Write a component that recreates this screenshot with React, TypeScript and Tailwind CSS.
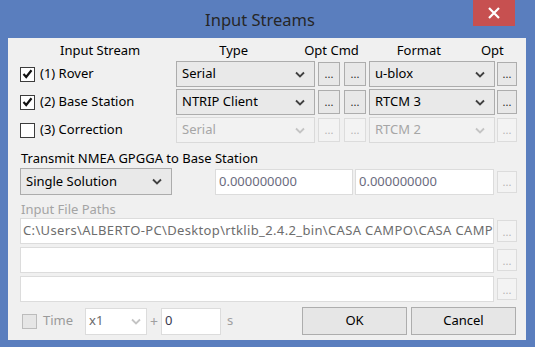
import React from "react";

const font = { fontFamily: '"Noto Sans", "Open Sans", Arial, sans-serif' };

const Chevron = ({ disabled }: { disabled?: boolean }) => (
  <svg width="10" height="7" viewBox="0 0 10 7" className="shrink-0">
    <path
      d="M1 1.5 L5 5.5 L9 1.5"
      fill="none"
      stroke={disabled ? "#c4c4c4" : "#404040"}
      strokeWidth="1.8"
    />
  </svg>
);

const Select = ({
  value,
  width,
  height = 26,
  disabled,
}: {
  value: string;
  width: string;
  height?: number;
  disabled?: boolean;
}) => (
  <div
    className={`${width} ${
      height === 27 ? "h-[27px]" : "h-[26px]"
    } flex items-center justify-between pl-[5px] pr-[9px] border ${
      disabled
        ? "border-[#dadada] bg-[#f2f2f2] text-[#a6a6a6]"
        : "border-[#acacac] bg-[#e9e9e9] text-black"
    }`}
  >
    <span className="truncate">{value}</span>
    <Chevron disabled={disabled} />
  </div>
);

const Dots = ({ disabled, w = "w-[22px]" }: { disabled?: boolean; w?: string }) => (
  <div
    className={`${w} h-[24px] flex items-center justify-center border text-[11px] leading-none pb-[1px] ${
      disabled
        ? "border-[#dcdcdc] bg-[#f3f3f3] text-[#b4b4b4]"
        : "border-[#adadad] bg-[#e8e8e8] text-[#2a2a2a]"
    }`}
  >
    ...
  </div>
);

const SmallDots = () => (
  <div className="w-[20px] h-[22px] flex items-center justify-center border border-[#dcdcdc] bg-[#f3f3f3] text-[#b4b4b4] text-[11px] leading-none">
    ...
  </div>
);

const Check = ({ checked, disabled }: { checked?: boolean; disabled?: boolean }) => (
  <div
    className={`w-[15px] h-[15px] shrink-0 flex items-center justify-center border ${
      disabled ? "border-[#bcbcbc] bg-[#e6e6e6]" : "border-[#3c3c3c] bg-white"
    }`}
  >
    {checked && (
      <svg width="11" height="10" viewBox="0 0 11 10">
        <path d="M1.5 5 L4.2 8 L9.5 1.2" fill="none" stroke="#111" strokeWidth="2.2" />
      </svg>
    )}
  </div>
);

const StreamRow = ({
  label,
  type,
  format,
  checked,
  disabled,
}: {
  label: string;
  type: string;
  format: string;
  checked?: boolean;
  disabled?: boolean;
}) => (
  <div className="flex items-center h-[26px]">
    <div className="w-[156px] flex items-center">
      <Check checked={checked} />
      <span className="ml-[5px] whitespace-nowrap">{label}</span>
    </div>
    <Select value={type} width="w-[139px]" disabled={disabled} />
    <div className="ml-[3px]">
      <Dots disabled={disabled} />
    </div>
    <div className="ml-[4px]">
      <Dots disabled={disabled} />
    </div>
    <div className="ml-[3px]">
      <Select value={format} width="w-[126px]" disabled={disabled} />
    </div>
    <div className="ml-[2px]">
      <Dots disabled={disabled} w="w-[20px]" />
    </div>
  </div>
);

const PathRow = ({ value }: { value?: string }) => (
  <div className="flex items-center h-[26px]">
    <div className="w-[474px] h-[26px] flex items-center px-[2px] border border-[#dcdcdc] bg-white text-[#6d6d6d] tracking-[0.35px] overflow-hidden whitespace-nowrap">
      {value}
    </div>
    <div className="ml-[3px]">
      <SmallDots />
    </div>
  </div>
);

export default function App() {
  return (
    <div
      className="w-[535px] h-[347px] bg-[#5a7ebe] flex flex-col text-[13px] text-black"
      style={font}
    >
      {/* title bar */}
      <div className="h-[38px] flex items-start shrink-0">
        <div className="flex-1 pl-[47px] pt-[8px] text-center text-[16.5px] text-[#262626]">
          Input Streams
        </div>
        <div className="w-[42px] h-[26px] mr-[20px] bg-[#c75050] flex items-center justify-center">
          <svg width="12" height="12" viewBox="0 0 12 12">
            <path d="M1 1 L11 11 M11 1 L1 11" stroke="#fff" strokeWidth="2.2" />
          </svg>
        </div>
      </div>

      {/* client area */}
      <div className="ml-[8px] mr-[9px] h-[302px] bg-[#f0f0f0] pl-[12px] pt-[3px] flex flex-col">
        <div className="flex items-center h-[20px] whitespace-nowrap">
          <span className="ml-[40px]">Input Stream</span>
          <span className="ml-[79px]">Type</span>
          <span className="ml-[56px]">Opt Cmd</span>
          <span className="ml-[38px]">Format</span>
          <span className="ml-[40px]">Opt</span>
        </div>

        <div className="flex flex-col gap-[2px]">
          <StreamRow label="(1) Rover" type="Serial" format="u-blox" checked />
          <StreamRow label="(2) Base Station" type="NTRIP Client" format="RTCM 3" checked />
          <StreamRow label="(3) Correction" type="Serial" format="RTCM 2" disabled />
        </div>

        <div className="mt-[8px] h-[16px] flex items-center ml-[1px]">
          Transmit NMEA GPGGA to Base Station
        </div>
        <div className="mt-[1px] flex items-center h-[27px]">
          <Select value="Single Solution" width="w-[152px]" height={27} />
          <div className="ml-[43px] w-[138px] h-[26px] flex items-center px-[3px] border border-[#dcdcdc] bg-white text-[#6b6b7e]">
            0.000000000
          </div>
          <div className="ml-[2px] w-[139px] h-[26px] flex items-center px-[3px] border border-[#dcdcdc] bg-white text-[#6b6b7e]">
            0.000000000
          </div>
          <div className="ml-[3px]">
            <SmallDots />
          </div>
        </div>

        <div className="mt-[7px] h-[16px] flex items-center ml-[1px] text-[#a4a4a4]">
          Input File Paths
        </div>
        <div className="flex flex-col gap-[3px]">
          <PathRow value="C:\Users\ALBERTO-PC\Desktop\rtklib_2.4.2_bin\CASA CAMPO\CASA CAMP" />
          <PathRow />
          <PathRow />
        </div>

        <div className="mt-[5px] flex items-center h-[28px] whitespace-nowrap">
          <div className="ml-[2px]">
            <Check disabled />
          </div>
          <span className="ml-[6px] w-[42px] text-[#9a9a9a]">Time</span>
          <div className="w-[62px] h-[27px] flex items-center justify-between pl-[3px] pr-[5px] border border-[#dcdcdc] bg-white text-[#6a6a6a]">
            <span>x1</span>
            <Chevron disabled />
          </div>
          <span className="w-[14px] text-center text-[#a0a0a0] text-[14px]">+</span>
          <div className="w-[60px] h-[27px] flex items-center px-[3px] border border-[#dcdcdc] bg-white text-[#3a3a50]">
            0
          </div>
          <span className="ml-[6px] w-[75px] text-[#a0a0a0]">s</span>
          <div className="w-[105px] h-[28px] flex items-center justify-center border border-[#adadad] bg-[#e6e6e6]">
            OK
          </div>
          <div className="ml-[4px] w-[105px] h-[28px] flex items-center justify-center border border-[#adadad] bg-[#e6e6e6]">
            Cancel
          </div>
        </div>
      </div>
    </div>
  );
}
